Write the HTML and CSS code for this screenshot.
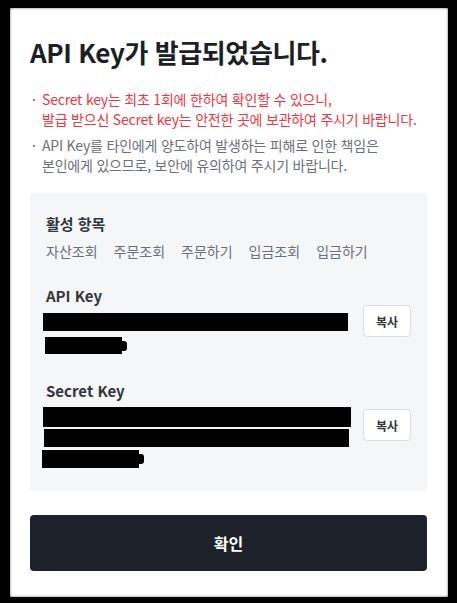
FILE: index.html
```html
<!DOCTYPE html>
<html lang="ko">
<head>
<meta charset="utf-8">
<link rel="stylesheet" href="styles.css">
</head>
<body>
<div class="modal">
  <h1 class="title">API Key가 발급되었습니다.</h1>
  <ul class="notes">
    <li class="warn">Secret key는 최초 1회에 한하여 확인할 수 있으니,<br>발급 받으신 Secret key는 안전한 곳에 보관하여 주시기 바랍니다.</li>
    <li class="info">API Key를 타인에게 양도하여 발생하는 피해로 인한 책임은<br>본인에게 있으므로, 보안에 유의하여 주시기 바랍니다.</li>
  </ul>
  <div class="panel">
    <div class="section">
      <h2 class="label">활성 항목</h2>
      <div class="perms">
        <span>자산조회</span><span>주문조회</span><span>주문하기</span><span>입금조회</span><span>입금하기</span>
      </div>
    </div>
    <div class="section key-section api">
      <h2 class="label">API Key</h2>
      <div class="key-row">
        <div class="redacted">
          <span class="bar bar-a1"></span>
          <span class="bar-line line-a2"><span class="bar bar-a2"></span><span class="nub"></span></span>
        </div>
        <button class="copy">복사</button>
      </div>
    </div>
    <div class="section key-section secret">
      <h2 class="label">Secret Key</h2>
      <div class="key-row">
        <div class="redacted">
          <span class="bar bar-s1"></span>
          <span class="bar bar-s2"></span>
          <span class="bar-line line-s3"><span class="bar bar-s3"></span><span class="nub"></span></span>
        </div>
        <button class="copy">복사</button>
      </div>
    </div>
  </div>
  <button class="confirm">확인</button>
</div>
</body>
</html>
```

FILE: styles.css
```css
html, body {
  margin: 0;
  padding: 0;
  background: #000;
}
body {
  font-family: "Noto Sans CJK KR", "Noto Sans", sans-serif;
  padding: 8px 9px 6px 10px;
  height: 603px;
  box-sizing: border-box;
}
.modal {
  background: #fff;
  height: 100%;
  box-sizing: border-box;
  padding: 26px 21px 0 20px;
  box-shadow: inset 0 0 2px 1px #bbb;
  border-radius: 2px;
}
.title {
  margin: 0;
  font-size: 26px;
  line-height: 36px;
  font-weight: 700;
  color: #1c1f27;
  letter-spacing: -0.4px;
}
.notes {
  list-style: none;
  margin: 19px 0 0;
  padding: 0;
}
.notes li {
  position: relative;
  padding-left: 12px;
  font-size: 14px;
  line-height: 20px;
  margin-bottom: 6px;
  letter-spacing: -0.2px;
}
.notes li:last-child { margin-bottom: 0; }
.notes li::before {
  content: "·";
  position: absolute;
  left: 2px;
  top: 0;
}
.warn { color: #f5333f; }
.info { color: #6b7079; }
.panel {
  margin-top: 18px;
  background: #f5f6f8;
  padding: 20px 16px 23px 16px;
  height: 298px;
  box-sizing: border-box;
}
.label {
  margin: 0;
  font-size: 15px;
  line-height: 22px;
  font-weight: 700;
  color: #33363d;
}
.perms {
  display: flex;
  gap: 16px;
  margin-top: 6px;
  font-size: 14px;
  line-height: 20px;
  color: #6b7079;
}
.key-section {
  margin-top: 24px;
}
.key-section.secret {
  margin-top: 26px;
}
.key-row {
  display: flex;
  justify-content: space-between;
  align-items: flex-start;
}
.redacted {
  display: flex;
  flex-direction: column;
}
.api .redacted { padding-top: 6px; }
.secret .redacted { padding-top: 5px; }
.bar {
  display: block;
  background: #000;
}
.bar-line {
  display: flex;
  align-items: center;
}
.nub {
  display: block;
  width: 5px;
  height: 10px;
  background: #000;
  border-radius: 0 3px 3px 0;
}
.bar-a1 { width: 305px; height: 18px; margin-left: -3px; }
.line-a2 { margin-top: 6px; margin-left: -1px; }
.bar-a2 { width: 77px; height: 17px; }
.bar-s1 { width: 308px; height: 20px; margin-left: -3px; }
.bar-s2 { width: 305px; height: 18px; margin-top: 2px; margin-left: -2px; }
.line-s3 { margin-top: 3px; margin-left: -4px; }
.bar-s3 { width: 97px; height: 18px; }
.copy {
  width: 48px;
  height: 32px;
  background: #fff;
  border: 1px solid #dcdee2;
  border-radius: 4px;
  font-family: inherit;
  font-size: 12px;
  font-weight: 700;
  color: #33363d;
  padding: 0;
}
.api .copy { margin-top: -2px; }
.secret .copy { margin-top: 7px; }
.confirm {
  display: block;
  width: 100%;
  height: 56px;
  margin-top: 24px;
  border: 0;
  border-radius: 4px;
  background: #1d212a;
  color: #fff;
  font-family: inherit;
  font-size: 16px;
  font-weight: 700;
}
```
